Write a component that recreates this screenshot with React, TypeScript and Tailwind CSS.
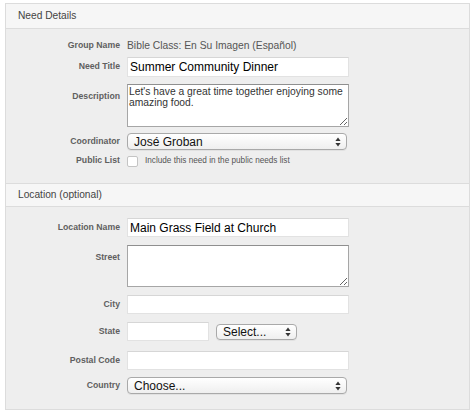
import React from 'react';

const font = { fontFamily: '"Liberation Sans", Arial, Helvetica, sans-serif' };

// small up/down arrows used by the mac-style selects
const Arrows = () => (
  <svg width="6" height="10" viewBox="0 0 6 10" className="shrink-0">
    <path d="M3 0.5 L5.6 4 L0.4 4 Z" fill="#333" />
    <path d="M3 9.5 L5.6 6 L0.4 6 Z" fill="#333" />
  </svg>
);

const FakeSelect: React.FC<{ value: string; className?: string }> = ({ value, className = '' }) => (
  <div
    className={`flex items-center justify-between rounded-[4px] border border-[#a9a9a9] bg-gradient-to-b from-white to-[#efefef] pl-[6px] pr-[5px] text-[12px] text-[#111] shadow-[0_1px_0_rgba(0,0,0,0.05)] ${className}`}
  >
    <span className="leading-none">{value}</span>
    <Arrows />
  </div>
);

const Label: React.FC<{ children: React.ReactNode; top?: boolean }> = ({ children, top }) => (
  <div
    className={`w-[114px] shrink-0 text-right text-[8.7px] font-bold text-[#5f5f5f] ${top ? 'self-start pt-[6px]' : ''}`}
  >
    {children}
  </div>
);

const TextBox: React.FC<{ value?: string; className?: string }> = ({ value = '', className = '' }) => (
  <div
    className={`flex items-center border border-[#e2e2e2] border-t-[#d6d6d6] bg-white pl-[2px] text-[12px] text-black ${className}`}
  >
    {value}
  </div>
);

const Header: React.FC<{ title: string; first?: boolean }> = ({ title, first }) => (
  <div
    className={`flex h-[24px] items-center border-b border-[#dcdcdc] bg-[#f6f6f6] pl-[12px] text-[10.2px] text-[#444] ${first ? 'h-[25px]' : 'border-t'}`}
  >
    {title}
  </div>
);

export default function App() {
  return (
    <div className="min-h-[412px] bg-white pt-[3px] pl-[5px]" style={font}>
      <div className="w-[465px] border border-[#dcdcdc] bg-[#eeeeee]">
        <Header title="Need Details" first />
        <div className="flex flex-col pt-[9px] pb-[16px]">
          <div className="flex h-[16px] items-center gap-[7px]">
            <Label>Group Name</Label>
            <div className="text-[10.3px] text-[#555]">Bible Class: En Su Imagen (Español)</div>
          </div>
          <div className="mt-[3px] flex items-center gap-[7px]">
            <Label>Need Title</Label>
            <TextBox value="Summer Community Dinner" className="h-[20px] w-[222px] text-[12.5px]" />
          </div>
          <div className="mt-[7px] flex gap-[7px]">
            <Label top>Description</Label>
            <textarea
              readOnly
              defaultValue="Let's have a great time together enjoying some amazing food."
              className="h-[43px] w-[222px] resize-y border border-[#a6a6a6] border-t-[#8f8f8f] bg-white px-[1px] py-[2px] text-[10.3px] leading-[10.5px] text-[#333] outline-none"
              style={font}
            />
          </div>
          <div className="mt-[6px] flex items-center gap-[7px]">
            <Label>Coordinator</Label>
            <FakeSelect value="José Groban" className="h-[17px] w-[220px]" />
          </div>
          <div className="mt-[5px] flex h-[12px] items-center gap-[7px]">
            <Label>Public List</Label>
            <div className="h-[11px] w-[11px] rounded-[2px] border border-[#c4c4c4] bg-white" />
            <div className="text-[8.2px] text-[#555]">Include this need in the public needs list</div>
          </div>
        </div>

        <Header title="Location (optional)" />
        <div className="flex flex-col pt-[11px] pb-[15px]">
          <div className="flex items-center gap-[7px]">
            <Label>Location Name</Label>
            <TextBox value="Main Grass Field at Church" className="h-[19px] w-[222px]" />
          </div>
          <div className="mt-[8px] flex gap-[7px]">
            <Label top>Street</Label>
            <textarea
              readOnly
              className="h-[42px] w-[222px] resize-y border border-[#a6a6a6] border-t-[#8f8f8f] bg-white outline-none"
            />
          </div>
          <div className="mt-[8px] flex items-center gap-[7px]">
            <Label>City</Label>
            <TextBox className="h-[19px] w-[222px]" />
          </div>
          <div className="mt-[8px] flex items-center gap-[7px]">
            <Label>State</Label>
            <TextBox className="h-[19px] w-[82px]" />
            <FakeSelect value="Select..." className="h-[16px] w-[81px]" />
          </div>
          <div className="mt-[10px] flex items-center gap-[7px]">
            <Label>Postal Code</Label>
            <TextBox className="h-[19px] w-[222px]" />
          </div>
          <div className="mt-[7px] flex items-center gap-[7px]">
            <Label>Country</Label>
            <FakeSelect value="Choose..." className="h-[17px] w-[220px]" />
          </div>
        </div>
      </div>
    </div>
  );
}
